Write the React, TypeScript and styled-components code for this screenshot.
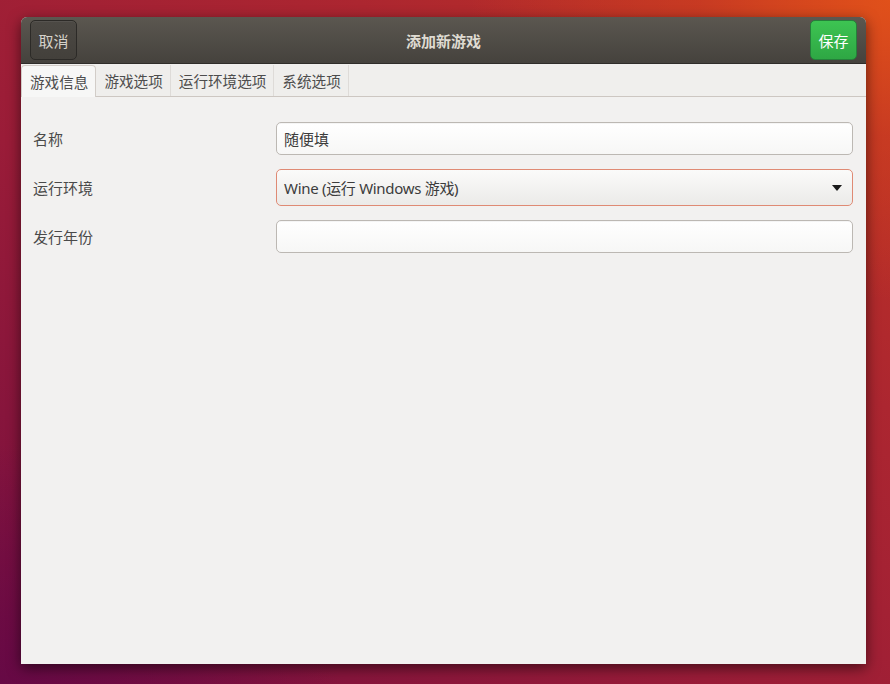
import React from 'react';
import styled, { createGlobalStyle } from 'styled-components';

const FONT = '"Noto Sans", "Noto Sans CJK SC", sans-serif';

const GlobalStyle = createGlobalStyle`
  html, body {
    margin: 0;
    padding: 0;
  }
  body {
    font-family: ${FONT};
  }
  * {
    box-sizing: border-box;
  }
`;

function App() {
  return (
    <Desktop>
      <GlobalStyle />
      <Window>
        <HeaderBar>
          <HeaderSide>
            <CancelButton>取消</CancelButton>
          </HeaderSide>
          <Title>添加新游戏</Title>
          <HeaderSide $end>
            <SaveButton>保存</SaveButton>
          </HeaderSide>
        </HeaderBar>
        <TabBar>
          <Tab $active>游戏信息</Tab>
          <Tab>游戏选项</Tab>
          <Tab>运行环境选项</Tab>
          <Tab>系统选项</Tab>
        </TabBar>
        <Form>
          <Label>名称</Label>
          <Entry defaultValue="随便填" />
          <Label>运行环境</Label>
          <Combo>
            <span>Wine (运行 Windows 游戏)</span>
            <svg width="10" height="6" viewBox="0 0 10 6">
              <path d="M0 0 H10 L5 6 Z" fill="#1a1a1a" />
            </svg>
          </Combo>
          <Label>发行年份</Label>
          <Entry defaultValue="" />
        </Form>
      </Window>
    </Desktop>
  );
}

export default App;

const Desktop = styled.div`
  width: 890px;
  height: 684px;
  overflow: hidden;
  padding: 17px 0 0 21px;
  background:
    radial-gradient(ellipse 420px 300px at 100% 0%, rgba(226, 82, 26, 0.95) 0%, rgba(210, 66, 32, 0.55) 45%, transparent 100%),
    radial-gradient(ellipse 340px 240px at 0% 100%, rgba(100, 8, 70, 0.85) 0%, transparent 100%),
    linear-gradient(to top right, #740e40 0%, #9a1c38 40%, #ac2630 70%, #c3371f 100%);
`;

const Window = styled.div`
  width: 845px;
  height: 647px;
  display: flex;
  flex-direction: column;
  background: #f2f1f0;
  border-radius: 6px 6px 0 0;
  box-shadow: 0 4px 14px rgba(0, 0, 0, 0.55);
  overflow: hidden;
`;

const HeaderBar = styled.div`
  height: 47px;
  flex: none;
  display: grid;
  grid-template-columns: 1fr auto 1fr;
  align-items: center;
  padding: 0 9px;
  background: linear-gradient(to bottom, #5b5750, #45423d);
  border-bottom: 1px solid #2f2d2a;
`;

const HeaderSide = styled.div<{ $end?: boolean }>`
  display: flex;
  justify-content: ${(p) => (p.$end ? 'flex-end' : 'flex-start')};
`;

const Title = styled.div`
  color: #dfdbd2;
  font-size: 15px;
  font-weight: bold;
`;

const HeaderButton = styled.button`
  height: 40px;
  width: 47px;
  padding: 0;
  border-radius: 5px;
  font-family: ${FONT};
  font-size: 15px;
  cursor: pointer;
`;

const CancelButton = styled(HeaderButton)`
  color: #d6d2ca;
  background: linear-gradient(to bottom, #4c4944, #43403b);
  border: 1px solid #2c2a27;
  box-shadow: inset 0 1px rgba(255, 255, 255, 0.06);
`;

const SaveButton = styled(HeaderButton)`
  color: #ffffff;
  background: linear-gradient(to bottom, #3dc452, #2ea744);
  border: 1px solid #25803a;
`;

const TabBar = styled.div`
  height: 33px;
  flex: none;
  display: flex;
  align-items: stretch;
  background: #f0efed;
  border-bottom: 1px solid #cdc7c2;
`;

const Tab = styled.div<{ $active?: boolean }>`
  display: flex;
  align-items: center;
  padding: 0 7px 0 8px;
  margin-top: 1px;
  font-size: 14.6px;
  color: #4d4d4d;
  border-right: 1px solid #dedbd8;
  background: ${(p) => (p.$active ? '#f7f7f6' : '#efeeec')};
  border-radius: ${(p) => (p.$active ? '4px 4px 0 0' : '0')};
  ${(p) => (p.$active ? 'border: 1px solid #d2cdc8; border-bottom: none; margin-bottom: -1px;' : '')}
`;

const Form = styled.div`
  display: grid;
  grid-template-columns: 243px 1fr;
  align-items: center;
  row-gap: 14px;
  padding: 25px 13px 0 12px;
`;

const Label = styled.div`
  font-size: 15px;
  color: #4a4a4a;
`;

const Entry = styled.input`
  height: 33px;
  width: 100%;
  padding: 0 7px;
  border: 1px solid #bcb8b3;
  border-radius: 5px;
  background: linear-gradient(to bottom, #ffffff, #f7f7f6);
  box-shadow: inset 0 1px rgba(0, 0, 0, 0.04);
  font-family: ${FONT};
  font-size: 15px;
  color: #3c3c3c;
  outline: none;
`;

const Combo = styled.div`
  height: 37px;
  display: flex;
  align-items: center;
  justify-content: space-between;
  padding: 0 10px 0 7px;
  border: 1px solid #df8a74;
  border-radius: 5px;
  background: linear-gradient(to bottom, #fbfbfa, #ebeae8);
  font-size: 15px;
  letter-spacing: -0.3px;
  color: #3c3c3c;
`;
